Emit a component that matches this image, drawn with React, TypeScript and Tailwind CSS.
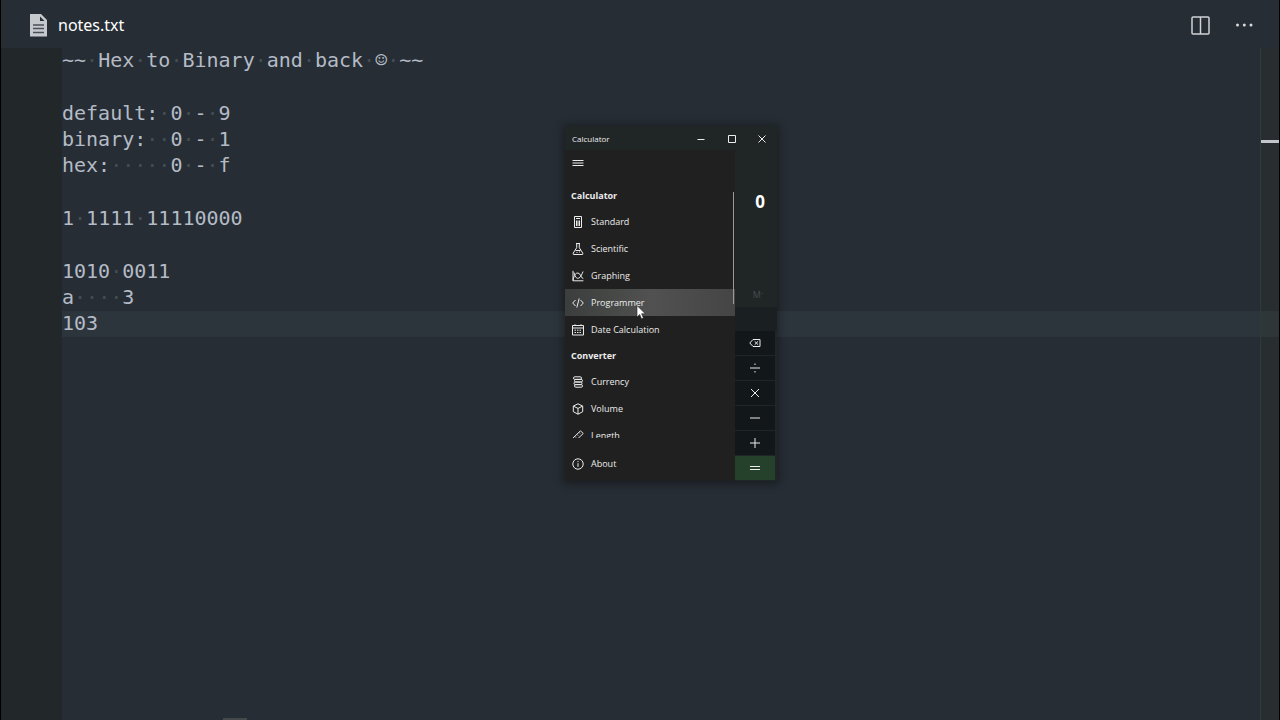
import { useState, type ReactNode } from "react";

const LINES = [
  "~~ Hex to Binary and back ☺ ~~",
  "",
  "default: 0 - 9",
  "binary:  0 - 1",
  "hex:     0 - f",
  "",
  "1 1111 11110000",
  "",
  "1010 0011",
  "a    3",
  "103",
];

const ICONS: Record<string, ReactNode> = {
  Standard: (
    <>
      <path d="M2.5 .5h7v11h-7z" />
      <path d="M4 2.5h4M4.500 4.500v5.500M6 4.500v5.500M7.500 4.500v5.500" />
    </>
  ),
  Scientific: (
    <>
      <path d="M4 .5h4M4.700 .5v4.200L1.200 10.200q-.5 1.300.8 1.300h8q1.300 0 .8-1.300L7.300 4.700V.5" />
      <path d="M3.500 7.500h5M4.500 9.500h1M7 9h1" />
    </>
  ),
  Graphing: (
    <>
      <path d="M1 .8v10h10.400" />
      <path d="M1 10.500C2 5 3.500 3 6 3S9 8.500 11.300 8.500M2 2.500C3.500 8 5 9 7 8S10 4 11 1.500" />
    </>
  ),
  Programmer: <path d="M3.500 3L.7 6l2.800 3M8.500 3l2.800 3-2.800 3M7.200 1.500l-2.400 9" />,
  "Date Calculation": (
    <>
      <path d="M.5 1.500h11v9.500H.5zM.5 4h11M3 .3v1.500M9 .3v1.500" />
      <path d="M2.500 6.200h7M2.500 8.500h7" strokeDasharray="1.500 1" />
    </>
  ),
  Currency: (
    <>
      <rect x="1.500" y=".8" width="8" height="2.600" rx="1.300" />
      <rect x="2.500" y="3.400" width="8" height="2.600" rx="1.300" />
      <rect x="2" y="6" width="8" height="2.600" rx="1.300" />
      <rect x="2.500" y="8.600" width="8" height="2.600" rx="1.300" />
    </>
  ),
  Volume: <path d="M6 .8l4.700 2.300v5.600L6 11.200 1.300 8.700V3.100zM1.300 3.100L6 5.400l4.700-2.300M6 5.400v5.800" />,
  Length: <path d="M.5 8.500L8.500 .8l2.700 2.700L3.500 11zM3 6.500l1 1M5 4.500l1 1M7 2.500l1 1" />,
  About: (
    <>
      <circle cx="6" cy="6" r="5.200" />
      <path d="M6 5.200v3.600M6 3v1.100" />
    </>
  ),
};

const KEYS = [
  { label: "Backspace", path: "M4 2.500h7v7H4L.8 6zM5.700 4.300l3.400 3.400M9.100 4.300L5.700 7.700" },
  { label: "Divide", path: "M1 6h10M6 1.500v1.500M6 9v1.500" },
  { label: "Multiply", path: "M2 2l8 8M10 2l-8 8" },
  { label: "Minus", path: "M1 6h10" },
  { label: "Plus", path: "M1 6h10M6 1v10" },
  { label: "Equals", path: "M1 4.500h10M1 7.500h10" },
];

function Icon({ children }: { children: ReactNode }) {
  return (
    <svg
      viewBox="0 0 12 12"
      className="size-3 shrink-0"
      fill="none"
      stroke="currentColor"
      aria-hidden="true"
    >
      {children}
    </svg>
  );
}

// Spaces are drawn as faint middle dots
function Line({ text }: { text: string }) {
  return (
    <>
      {text.split(/( +)/).map((part, i) =>
        part.startsWith(" ") ? (
          <span key={`${i}-ws`} className="text-[#454d53]">
            {"·".repeat(part.length)}
          </span>
        ) : (
          part
        ),
      )}
    </>
  );
}

function NavItem({
  name,
  active,
  onSelect,
}: {
  name: string;
  active?: boolean;
  onSelect?: () => void;
}) {
  return (
    <button
      type="button"
      onClick={onSelect}
      className={`flex h-[27px] w-full shrink-0 items-center gap-[7px] pl-[7px] text-left ${
        active ? "bg-linear-to-r from-[#3b3e3c] via-[#505150] to-[#454545]" : ""
      }`}
    >
      <Icon>{ICONS[name]}</Icon>
      {name}
    </button>
  );
}

function Calculator() {
  const [mode, setMode] = useState("Programmer");

  return (
    <section
      aria-label="Calculator"
      className="absolute top-[126px] left-[564px] flex w-[212px] flex-col bg-[#202526] font-['Open_Sans',sans-serif] text-[9px] font-medium text-[#ececec] shadow-[0_1px_8px_2px_rgba(0,0,0,0.35)]"
    >
      <div className="flex h-6 items-center pt-0.5 pl-[7px] text-[8px]">
        <span className="flex-1">Calculator</span>
        <button type="button" aria-label="Minimize" className="flex w-[30px] justify-center">
          <Icon><path d="M2.500 6.500h7" /></Icon>
        </button>
        <button type="button" aria-label="Maximize" className="flex w-[31px] justify-center">
          <Icon><path d="M2.500 2.500h7v7h-7z" /></Icon>
        </button>
        <button type="button" aria-label="Close" className="flex w-[30px] justify-center">
          <Icon><path d="M2.500 2.500l7 7M9.500 2.500l-7 7" /></Icon>
        </button>
      </div>

      <div className="flex">
        <div className="relative w-[170px] bg-[#202020]">
          <button type="button" aria-label="Open navigation" className="flex h-[33px] w-full items-start pt-[7px] pl-[7px]">
            <Icon><path d="M.5 3.500h11M.5 6h11M.5 8.500h11" /></Icon>
          </button>
          <nav className="flex h-[255px] flex-col overflow-hidden">
            <h2 className="flex h-[25px] shrink-0 items-center pl-1.5 font-bold">Calculator</h2>
            {["Standard", "Scientific", "Graphing", "Programmer", "Date Calculation"].map((name) => (
              <NavItem key={name} name={name} active={mode === name} onSelect={() => setMode(name)} />
            ))}
            <h2 className="flex h-[25px] shrink-0 items-center pl-1.5 font-bold">Converter</h2>
            {["Currency", "Volume", "Length"].map((name) => (
              <NavItem key={name} name={name} active={mode === name} onSelect={() => setMode(name)} />
            ))}
          </nav>
          <div className="pt-3 pb-1">
            <NavItem name="About" />
          </div>
          <div className="absolute top-[42px] right-px h-28 w-px bg-[#9a9a9a]" />
        </div>

        <div className="flex flex-1 flex-col">
          <output className="pt-9 pr-3 text-right text-[17px] leading-8 font-bold text-white">0</output>
          <div className="mt-auto flex h-6 items-center justify-center pl-1 text-[#4a4e4f]">
            <span>M<sup>-</sup></span>
          </div>
          <div className="h-6 bg-[#1a1f21]" />
          <div className="grid gap-px bg-[#202526] pr-0.5 pb-px">
            {KEYS.map((key) => (
              <button
                key={key.label}
                type="button"
                aria-label={key.label}
                className={`flex h-6 items-center justify-center ${
                  key.label === "Equals" ? "bg-[#25402b]" : "bg-[#121719]"
                }`}
              >
                <Icon><path d={key.path} /></Icon>
              </button>
            ))}
          </div>
        </div>
      </div>
    </section>
  );
}

export default function App() {
  return (
    <div className="relative flex h-screen flex-col overflow-hidden border-x border-black bg-[#262d34]">
      <header className="flex h-12 shrink-0 items-center pt-0.5 pr-[25px] pl-7 font-['Noto_Sans',sans-serif] text-base text-white">
        <svg viewBox="0 0 18 23" className="mr-[11px] h-[23px] w-[18px]" aria-hidden="true">
          <path d="M1 0h11l6 6v16.500H1z" fill="#c5c8cd" />
          <path d="M11 2.500v4.500h4.500z" fill="#262d34" />
          <path d="M4 11h11M4 14.500h11M4 18.500h11" stroke="#4a5057" strokeWidth="1.300" />
        </svg>
        <span className="flex-1">notes.txt</span>
        <button type="button" aria-label="Split editor" className="mr-6">
          <svg viewBox="0 0 19 19" className="size-[19px]" fill="none" stroke="#d0d2d5" strokeWidth="1.500">
            <rect x="1" y="1" width="17" height="17" rx="1" />
            <path d="M9.500 1v17" />
          </svg>
        </button>
        <button type="button" aria-label="More actions">
          <svg viewBox="0 0 20 20" className="size-5" fill="#d8dadc">
            <circle cx="3.500" cy="10" r="1.500" />
            <circle cx="10.300" cy="10" r="1.500" />
            <circle cx="17" cy="10" r="1.500" />
          </svg>
        </button>
      </header>

      <main className="relative flex flex-1">
        <div className="w-[61px] bg-[#22282a]" />
        <div className="flex-1 font-['DejaVu_Sans_Mono',monospace] text-[20px] whitespace-pre text-[#b4bbc6]">
          {LINES.map((text, i) => (
            <div
              key={`line-${i + 1}`}
              className={`${text ? "h-[26px] leading-6" : "h-[27px]"} ${
                i === LINES.length - 1 ? "bg-[#2d353c]" : ""
              }`}
            >
              <Line text={text} />
            </div>
          ))}
        </div>
        <div className="w-[19px] border-l border-[#303840] bg-[#282d30]">
          <div className="mt-[92px] h-[3px] bg-[#c3c6cb]" />
          <div className="mt-[168px] h-[26px] bg-[#2e3638]" />
        </div>
      </main>

      <Calculator />

      {/* Mouse pointer */}
      <svg viewBox="0 0 10 15" className="absolute top-[305px] left-[635px] h-[15px] w-[10px]" aria-hidden="true">
        <path d="M1 .5v11.500l2.700-2.500 1.800 4.300 1.900-.8-1.800-4.200h3.700z" fill="#fff" stroke="#222" strokeWidth=".6" />
      </svg>
      <div className="absolute bottom-0 left-[222px] h-0.5 w-6 bg-[#45494b]" />
    </div>
  );
}
